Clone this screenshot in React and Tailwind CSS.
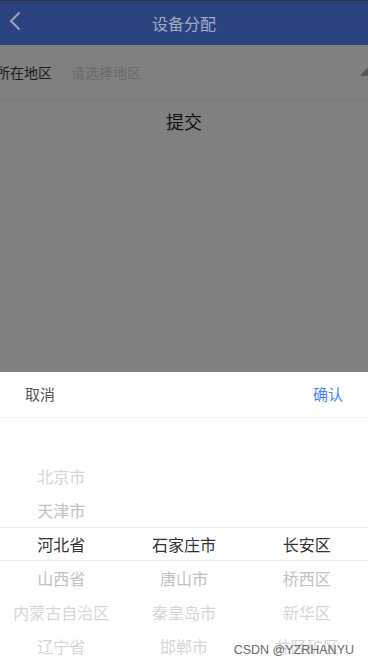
import { ChevronLeft } from "lucide-react";

const provinces = ["北京市", "天津市", "河北省", "山西省", "内蒙古自治区", "辽宁省"];
const cities = ["", "", "石家庄市", "唐山市", "秦皇岛市", "邯郸市"];
const districts = ["", "", "长安区", "桥西区", "新华区", "井陉矿区"];

const tone = (i) => {
  if (i === 2) return "text-[#333333]";
  if (i === 1 || i === 3) return "text-[#c2c2c2]";
  return "text-[#d6d6d6]";
};

function Column({ items }) {
  return (
    <div className="flex flex-1 flex-col">
      {items.map((item, i) => (
        <div
          key={i}
          className={`flex h-[34px] items-center justify-center whitespace-nowrap text-[16px] ${tone(i)}`}
        >
          {item}
        </div>
      ))}
    </div>
  );
}

export default function App() {
  return (
    <div
      className="relative flex h-[664px] w-[368px] flex-col overflow-hidden bg-[#808080]"
      style={{ fontFamily: '"Noto Sans CJK SC", "Noto Sans", sans-serif' }}
    >
      <header className="relative flex h-[45px] shrink-0 items-center justify-center border-t border-[#333] bg-[#2c4381]">
        <ChevronLeft className="absolute -left-[1px] top-[4px] h-[32px] w-[32px] text-[#9aa3bd]" strokeWidth={1.5} />
        <span className="text-[16px] text-[#a3abc2]">设备分配</span>
      </header>

      <div className="flex h-[55px] shrink-0 items-center border-b border-[#787878] pl-0">
        <span className="-ml-[4px] text-[14px] text-[#1a1a1a]">所在地区</span>
        <span className="ml-[19px] text-[14px] text-[#6a6a6a]">请选择地区</span>
        <span className="ml-auto mr-[-6px] h-0 w-0 border-x-[7px] border-b-[8px] border-x-transparent border-b-[#555]" />
      </div>

      <div className="flex h-[42px] items-center justify-center text-[18px] text-[#111]">提交</div>

      <div className="flex-1" />

      <div className="h-[292px] shrink-0 overflow-hidden bg-white">
        <div className="flex h-[46px] items-center justify-between border-b border-[#f2f2f2] px-[25px] text-[15px]">
          <span className="text-[#555]">取消</span>
          <span className="text-[#4a80f5]">确认</span>
        </div>
        <div className="relative pt-[41px]">
          <div className="pointer-events-none absolute left-0 right-0 top-[109px] h-[34px] border-y border-[#ececec]" />
          <div className="flex">
            <Column items={provinces} />
            <Column items={cities} />
            <Column items={districts} />
          </div>
        </div>
      </div>

      <span
        className="absolute right-[14px] top-[641px] text-[12.5px] text-[#6b6b6b]"
        style={{ fontFamily: '"Liberation Sans", sans-serif' }}
      >
        CSDN @YZRHANYU
      </span>
    </div>
  );
}
